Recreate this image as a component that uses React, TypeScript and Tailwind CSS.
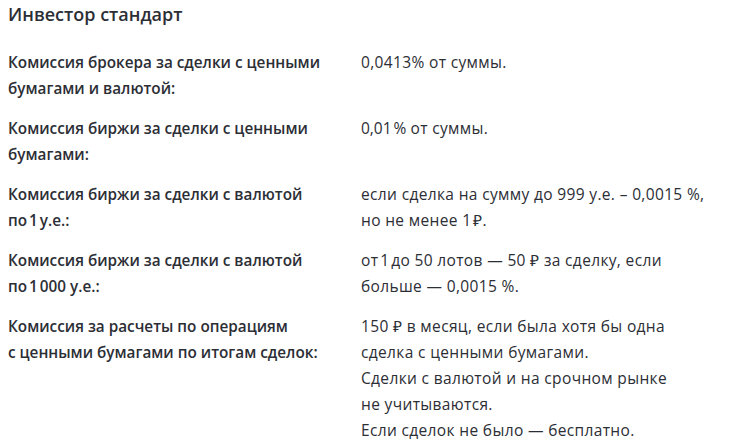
const rows: { label: string[]; value: string[] }[] = [
  {
    label: ["Комиссия брокера за сделки с ценными", "бумагами и валютой:"],
    value: ["0,0413% от суммы."],
  },
  {
    label: ["Комиссия биржи за сделки с ценными", "бумагами:"],
    value: ["0,01\u202F% от суммы."],
  },
  {
    label: ["Комиссия биржи за сделки с валютой", "по\u202F1\u202Fу.е.:"],
    value: ["если сделка на сумму до 999 у.е. – 0,0015 %,", "но не менее 1\u202F₽."],
  },
  {
    label: ["Комиссия биржи за сделки с валютой", "по\u202F1\u202F000 у.е.:"],
    value: ["от\u202F1\u202Fдо 50 лотов — 50 ₽ за сделку, если", "больше — 0,0015 %."],
  },
  {
    label: ["Комиссия за расчеты по операциям", "с ценными бумагами по итогам сделок:"],
    value: [
      "150 ₽ в месяц, если была хотя бы одна",
      "сделка с ценными бумагами.",
      "Сделки с валютой и на срочном рынке",
      "не учитываются.",
      "Если сделок не было — бесплатно.",
    ],
  },
];

export default function App() {
  return (
    <div className="h-[443px] w-[738px] overflow-hidden bg-white px-2 pt-[1px] font-['Open_Sans',sans-serif] text-[#2c2e35]">
      <h2 className="text-[18px] leading-[26px] font-semibold">Инвестор стандарт</h2>

      <div className="mt-[22px] flex flex-col gap-[14px]">
        {rows.map((row, i) => (
          <div key={i} className="flex leading-[26px]">
            <div className="w-[353px] shrink-0 text-[15.3px] font-semibold">
              {row.label.map((l, j) => (
                <div key={j} className="whitespace-nowrap">{l}</div>
              ))}
            </div>
            <div className="text-[15.5px] tracking-[0.35px]">
              {row.value.map((v, j) => (
                <div key={j} className="whitespace-nowrap">{v}</div>
              ))}
            </div>
          </div>
        ))}
      </div>
    </div>
  );
}
